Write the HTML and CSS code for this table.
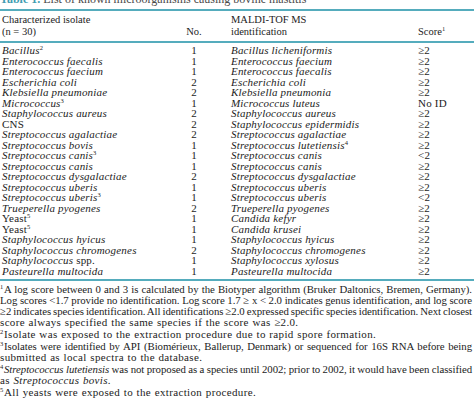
FILE: index.html
```html
<!DOCTYPE html>
<html lang="en">
<head>
<meta charset="utf-8">
<title>Table 1</title>
<link rel="stylesheet" href="styles.css">
</head>
<body>
<div class="page">
  <div class="caption"><span class="cap-label">Table 1.</span> List of known microorganisms causing bovine mastitis</div>
  <table class="tbl">
    <colgroup>
      <col class="w1"><col class="w2"><col class="w3"><col class="w4">
    </colgroup>
    <thead>
      <tr>
        <th class="c1">Characterized isolate<br>(n = 30)</th>
        <th class="c2">No.</th>
        <th class="c3">MALDI-TOF MS<br>identification</th>
        <th class="c4">Score<sup>1</sup></th>
      </tr>
    </thead>
    <tbody>
      <tr><td class="c1"><i>Bacillus</i><sup>2</sup></td><td class="c2">1</td><td class="c3"><i>Bacillus licheniformis</i></td><td class="c4">≥2</td></tr>
      <tr><td class="c1"><i>Enterococcus faecalis</i></td><td class="c2">1</td><td class="c3"><i>Enterococcus faecium</i></td><td class="c4">≥2</td></tr>
      <tr><td class="c1"><i>Enterococcus faecium</i></td><td class="c2">1</td><td class="c3"><i>Enterococcus faecalis</i></td><td class="c4">≥2</td></tr>
      <tr><td class="c1"><i>Escherichia coli</i></td><td class="c2">2</td><td class="c3"><i>Escherichia coli</i></td><td class="c4">≥2</td></tr>
      <tr><td class="c1"><i>Klebsiella pneumoniae</i></td><td class="c2">2</td><td class="c3"><i>Klebsiella pneumonia</i></td><td class="c4">≥2</td></tr>
      <tr><td class="c1"><i>Micrococcus</i><sup>3</sup></td><td class="c2">1</td><td class="c3"><i>Micrococcus luteus</i></td><td class="c4">No ID</td></tr>
      <tr><td class="c1"><i>Staphylococcus aureus</i></td><td class="c2">2</td><td class="c3"><i>Staphylococcus aureus</i></td><td class="c4">≥2</td></tr>
      <tr><td class="c1">CNS</td><td class="c2">2</td><td class="c3"><i>Staphylococcus epidermidis</i></td><td class="c4">≥2</td></tr>
      <tr><td class="c1"><i>Streptococcus agalactiae</i></td><td class="c2">2</td><td class="c3"><i>Streptococcus agalactiae</i></td><td class="c4">≥2</td></tr>
      <tr><td class="c1"><i>Streptococcus bovis</i></td><td class="c2">1</td><td class="c3"><i>Streptococcus lutetiensis</i><sup>4</sup></td><td class="c4">≥2</td></tr>
      <tr><td class="c1"><i>Streptococcus canis</i><sup>3</sup></td><td class="c2">1</td><td class="c3"><i>Streptococcus canis</i></td><td class="c4">&lt;2</td></tr>
      <tr><td class="c1"><i>Streptococcus canis</i></td><td class="c2">1</td><td class="c3"><i>Streptococcus canis</i></td><td class="c4">≥2</td></tr>
      <tr><td class="c1"><i>Streptococcus dysgalactiae</i></td><td class="c2">2</td><td class="c3"><i>Streptococcus dysgalactiae</i></td><td class="c4">≥2</td></tr>
      <tr><td class="c1"><i>Streptococcus uberis</i></td><td class="c2">1</td><td class="c3"><i>Streptococcus uberis</i></td><td class="c4">≥2</td></tr>
      <tr><td class="c1"><i>Streptococcus uberis</i><sup>3</sup></td><td class="c2">1</td><td class="c3"><i>Streptococcus uberis</i></td><td class="c4">&lt;2</td></tr>
      <tr><td class="c1"><i>Trueperella pyogenes</i></td><td class="c2">2</td><td class="c3"><i>Trueperella pyogenes</i></td><td class="c4">≥2</td></tr>
      <tr><td class="c1">Yeast<sup>5</sup></td><td class="c2">1</td><td class="c3"><i>Candida kefyr</i></td><td class="c4">≥2</td></tr>
      <tr><td class="c1">Yeast<sup>5</sup></td><td class="c2">1</td><td class="c3"><i>Candida krusei</i></td><td class="c4">≥2</td></tr>
      <tr><td class="c1"><i>Staphylococcus hyicus</i></td><td class="c2">1</td><td class="c3"><i>Staphylococcus hyicus</i></td><td class="c4">≥2</td></tr>
      <tr><td class="c1"><i>Staphylococcus chromogenes</i></td><td class="c2">2</td><td class="c3"><i>Staphylococcus chromogenes</i></td><td class="c4">≥2</td></tr>
      <tr><td class="c1"><i>Staphylococcus</i> spp.</td><td class="c2">1</td><td class="c3"><i>Staphylococcus xylosus</i></td><td class="c4">≥2</td></tr>
      <tr><td class="c1"><i>Pasteurella multocida</i></td><td class="c2">1</td><td class="c3"><i>Pasteurella multocida</i></td><td class="c4">≥2</td></tr>
    </tbody>
  </table>
  <div class="notes">
    <p class="note">
      <span class="ln full"><sup>1</sup>A log score between 0 and 3 is calculated by the Biotyper algorithm (Bruker Daltonics, Bremen, Germany).</span>
      <span class="ln full">Log scores &lt;1.7 provide no identification. Log score 1.7 ≥ x &lt; 2.0 indicates genus identification, and log score</span>
      <span class="ln full">≥2 indicates species identification. All identifications ≥2.0 expressed specific species identification. Next closest</span>
      <span class="ln">score always specified the same species if the score was ≥2.0.</span>
    </p>
    <p class="note">
      <span class="ln"><sup>2</sup>Isolate was exposed to the extraction procedure due to rapid spore formation.</span>
    </p>
    <p class="note">
      <span class="ln full"><sup>3</sup>Isolates were identified by API (Biomérieux, Ballerup, Denmark) or sequenced for 16S RNA before being</span>
      <span class="ln">submitted as local spectra to the database.</span>
    </p>
    <p class="note">
      <span class="ln full"><sup>4</sup><i>Streptococcus lutetiensis</i> was not proposed as a species until 2002; prior to 2002, it would have been classified</span>
      <span class="ln">as <i>Streptococcus bovis.</i></span>
    </p>
    <p class="note">
      <span class="ln"><sup>5</sup>All yeasts were exposed to the extraction procedure.</span>
    </p>
  </div>
</div>
</body>
</html>
```

FILE: styles.css
```css
html, body {
  margin: 0;
  padding: 0;
  background: #ffffff;
}

.page {
  width: 474px;
  height: 405px;
  overflow: hidden;
  font-family: "Liberation Serif", "Times New Roman", serif;
  font-size: 11px;
  color: #1c1c1c;
}

.caption {
  height: 13px;
  line-height: 13px;
  margin-top: -7.5px;
  margin-bottom: 3.5px;
  font-size: 12px;
  color: #4a4a4a;
  white-space: nowrap;
}

.cap-label {
  color: #3f9db2;
  font-weight: bold;
}

.tbl {
  width: 474px;
  border-collapse: collapse;
  table-layout: fixed;
  letter-spacing: 0.2px;
}

.w1 { width: 172px; }
.w2 { width: 44px; }
.w3 { width: 202px; }
.w4 { width: 56px; }

.tbl th {
  font-weight: normal;
  font-size: 10.5px;
  letter-spacing: 0;
  text-align: left;
  vertical-align: bottom;
  line-height: 12px;
  padding: 3px 0 3px 0;
  border-top: 2px solid #55acbd;
  border-bottom: 2px solid #55acbd;
}

.tbl td {
  line-height: 10.52px;
  height: 10.52px;
  padding: 0;
  white-space: nowrap;
  vertical-align: middle;
}

.tbl tbody tr:first-child td { padding-top: 2px; }
.tbl tbody tr:last-child td {
  padding-bottom: 3px;
  border-bottom: 2px solid #55acbd;
}

.c1 { padding-left: 2px !important; }
.c2 { text-align: center !important; }
.c3 { padding-left: 15px !important; }
.c4 { padding-left: 0; }

sup {
  font-size: 6.5px;
  line-height: 0;
  vertical-align: 4px;
}

.notes {
  width: 472px;
  padding: 2.5px 0 0 0;
}

.note {
  margin: 0 0 1px 0;
  line-height: 11px;
}

.ln {
  display: block;
  white-space: nowrap;
  letter-spacing: 0.35px;
  word-spacing: 0.5px;
}

.ln.full {
  white-space: normal;
  font-size: 10.8px;
  word-spacing: -2px;
  letter-spacing: -0.05px;
  text-align: justify;
  text-align-last: justify;
}

.note sup {
  display: inline-block;
  width: 4px;
  font-size: 6.5px;
  letter-spacing: 0;
  word-spacing: 0;
}
```
